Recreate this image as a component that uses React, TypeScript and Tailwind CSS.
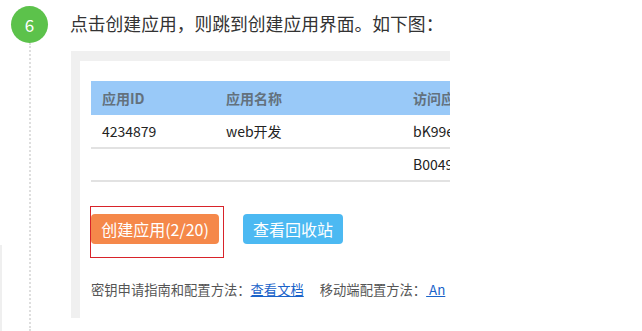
import React from "react";

const font = { fontFamily: '"Noto Sans CJK SC", "Noto Sans", sans-serif' };

export default function App() {
  return (
    <div className="relative flex w-[642px] h-[331px] overflow-hidden bg-white text-[#333]" style={font}>
      {/* faint left edge line */}
      <div className="w-[2px] mt-[245px] bg-[#efefef]" />

      {/* step column */}
      <div className="w-[68px] flex flex-col items-start">
        <div className="ml-[9px] mt-[6px] w-[37px] h-[37px] rounded-full bg-[#5cc24b] flex items-center justify-center text-white text-[17px] leading-none">
          6
        </div>
        <div className="ml-[27px] flex-1 border-l-2 border-dotted border-[#dedede]" />
      </div>

      {/* content column */}
      <div className="flex flex-col">
        <div className="mt-[12px] h-[24px] flex items-center text-[17.8px] leading-none text-[#333] whitespace-nowrap">
          点击创建应用，则跳到创建应用界面。如下图：
        </div>

        {/* screenshot frame */}
        <div className="mt-[15px] ml-[1px] w-[379px] h-[267px] bg-[#f0f0f0] pl-[9px] pt-[10px] overflow-hidden">
          <div className="w-full h-full bg-white pl-[11px] pt-[20px] overflow-hidden">
            {/* table */}
            <div className="w-[420px] text-[14px]">
              <div className="flex h-[34px] items-center bg-[#99c9f8] font-bold text-[#63717d]">
                <div className="w-[135px] pl-[11px]">应用ID</div>
                <div className="w-[187px]">应用名称</div>
                <div className="whitespace-nowrap">访问应</div>
              </div>
              <div className="flex h-[34px] items-center border-b-2 border-[#e2e2e2] text-[#222]">
                <div className="w-[135px] pl-[11px]">4234879</div>
                <div className="w-[187px]">web开发</div>
                <div className="whitespace-nowrap">bK99e</div>
              </div>
              <div className="flex h-[33px] items-center border-b-2 border-[#e2e2e2] text-[#222]">
                <div className="w-[135px] pl-[11px]"></div>
                <div className="w-[187px]"></div>
                <div className="whitespace-nowrap">B0049</div>
              </div>
            </div>

            {/* buttons */}
            <div className="relative mt-[32px] flex gap-[24px]">
              <div className="w-[128px] h-[30px] rounded-[4px] bg-[#f5884a] text-white text-[16px] flex items-center justify-center whitespace-nowrap">
                创建应用(2/20)
              </div>
              <div className="w-[100px] h-[30px] rounded-[4px] bg-[#4cb9f2] text-white text-[16px] flex items-center justify-center whitespace-nowrap">
                查看回收站
              </div>
              <div className="absolute left-[-1px] top-[-8px] w-[134px] h-[52px] border border-[#d8232a]" />
            </div>

            {/* footer */}
            <div className="mt-[36px] flex items-center text-[13.3px] text-[#555] whitespace-nowrap">
              <span>密钥申请指南和配置方法：</span>
              <span className="text-[#1a63c9] underline">查看文档</span>
              <span className="ml-[16px]">移动端配置方法：</span>
              <span className="text-[#1a63c9] underline">&nbsp;An</span>
            </div>
          </div>
        </div>
      </div>
    </div>
  );
}
